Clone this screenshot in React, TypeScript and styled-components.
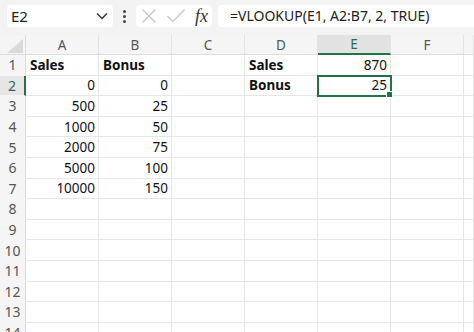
import styled, { createGlobalStyle, css } from "styled-components"

const GlobalStyle = createGlobalStyle`
	html, body {
		margin: 0;
		padding: 0;
		background: #ffffff;
		font-family: "Noto Sans", "Liberation Sans", sans-serif;
		overflow: hidden;
	}
`

const Page = styled.div`
	width: 474px;
	height: 332px;
	background: #f3f3f3;
	overflow: hidden;
`

const FormulaBar = styled.div`
	display: flex;
	align-items: center;
	height: 22px;
	padding: 5px 0 0 7px;
`

const NameBox = styled.div`
	display: flex;
	align-items: center;
	justify-content: space-between;
	width: 106px;
	height: 22px;
	box-sizing: border-box;
	padding: 0 4px 0 4px;
	background: #ffffff;
	border-radius: 4px;
	font-size: 15px;
	color: #222222;
`

const Dots = styled.div`
	display: flex;
	flex-direction: column;
	gap: 2px;
	margin: 0 10px 0 10px;

	span {
		width: 3px;
		height: 3px;
		border-radius: 2px;
		background: #444444;
	}
`

const ButtonBox = styled.div`
	display: flex;
	align-items: center;
	justify-content: space-between;
	width: 76px;
	height: 22px;
	box-sizing: border-box;
	padding: 0 4px 0 5px;
	background: #ffffff;
	border-radius: 4px;
`

const Fx = styled.span`
	font-family: "Liberation Serif", serif;
	font-style: italic;
	font-size: 18px;
	color: #333333;
`

const FormulaInput = styled.div`
	flex: 1;
	height: 22px;
	margin-left: 6px;
	padding-left: 12px;
	background: #ffffff;
	border-radius: 4px 0 0 4px;
	font-size: 14px;
	line-height: 22px;
	color: #222222;
	white-space: nowrap;
`

const Sheet = styled.div`
	display: grid;
	grid-template-columns: 26px repeat(6, 73px) 1fr;
	grid-template-rows: 20px;
	grid-auto-rows: 20.6px;
	margin-top: 8px;
	background: #ffffff;
	font-size: 13.5px;
	color: #111111;
`

const Corner = styled.div`
	position: relative;
	background: #f5f5f5;
	border-right: 1px solid #dddddd;
	border-bottom: 1px solid #dddddd;

	&::after {
		content: "";
		position: absolute;
		right: 2px;
		bottom: 1px;
		border-left: 16px solid transparent;
		border-bottom: 14px solid #dadada;
	}
`

const ColHead = styled.div<{ $active?: boolean }>`
	display: flex;
	align-items: center;
	justify-content: center;
	background: #f5f5f5;
	border-right: 1px solid #e3e3e3;
	border-bottom: 1px solid #dddddd;
	color: #555555;
	font-size: 13.5px;
	${(p) =>
		p.$active &&
		css`
			background: #e2e2e2;
			color: #2f6b4a;
			border-bottom: 2px solid #217346;
		`}
`

const RowHead = styled.div<{ $active?: boolean }>`
	display: flex;
	align-items: center;
	justify-content: center;
	background: #f5f5f5;
	border-right: 1px solid #dddddd;
	border-bottom: 1px solid #f5f5f5;
	color: #555555;
	font-size: 14px;
	${(p) =>
		p.$active &&
		css`
			background: #e6e6e6;
			color: #2f6b4a;
			border-right: 2px solid #217346;
		`}
`

const Cell = styled.div<{ $num?: boolean; $bold?: boolean; $selected?: boolean }>`
	position: relative;
	display: flex;
	align-items: center;
	justify-content: ${(p) => (p.$num ? "flex-end" : "flex-start")};
	padding: 0 3px 0 4px;
	border-right: 1px solid #e6e6e6;
	border-bottom: 1px solid #e6e6e6;
	font-weight: ${(p) => (p.$bold ? 700 : 400)};
	white-space: nowrap;
	${(p) =>
		p.$selected &&
		css`
			outline: 2px solid #217346;
			outline-offset: -1px;
			z-index: 1;
		`}
`

const Handle = styled.span`
	position: absolute;
	right: -3px;
	bottom: -3px;
	width: 5px;
	height: 5px;
	background: #217346;
	border: 1px solid #ffffff;
`

type CellData = { v?: string; num?: boolean; bold?: boolean }

const cols = ["A", "B", "C", "D", "E", "F", ""]

const data: Record<number, CellData[]> = {
	1: [{ v: "Sales", bold: true }, { v: "Bonus", bold: true }, {}, { v: "Sales", bold: true }, { v: "870", num: true }],
	2: [{ v: "0", num: true }, { v: "0", num: true }, {}, { v: "Bonus", bold: true }, { v: "25", num: true }],
	3: [{ v: "500", num: true }, { v: "25", num: true }],
	4: [{ v: "1000", num: true }, { v: "50", num: true }],
	5: [{ v: "2000", num: true }, { v: "75", num: true }],
	6: [{ v: "5000", num: true }, { v: "100", num: true }],
	7: [{ v: "10000", num: true }, { v: "150", num: true }],
}

const rows = Array.from({ length: 14 }, (_, i) => i + 1)

export default function App() {
	return (
		<>
			<GlobalStyle />
			<Page>
				<FormulaBar>
					<NameBox>
						<span>E2</span>
						<svg width="14" height="8" viewBox="0 0 14 8">
							<path d="M2 1.5 L7 6.5 L12 1.5" fill="none" stroke="#333" strokeWidth="1.4" />
						</svg>
					</NameBox>
					<Dots>
						<span />
						<span />
						<span />
					</Dots>
					<ButtonBox>
						<svg width="16" height="16" viewBox="0 0 16 16">
							<path d="M1.5 1.5 L14.5 14.5 M14.5 1.5 L1.5 14.5" stroke="#c4c4c4" strokeWidth="1.2" />
						</svg>
						<svg width="20" height="16" viewBox="0 0 20 16">
							<path d="M1.5 8 L7 13.5 L18.5 1.5" fill="none" stroke="#c4c4c4" strokeWidth="1.2" />
						</svg>
						<Fx>fx</Fx>
					</ButtonBox>
					<FormulaInput>=VLOOKUP(E1, A2:B7, 2, TRUE)</FormulaInput>
				</FormulaBar>
				<Sheet>
					<Corner />
					{cols.map((c, i) => (
						<ColHead key={i} $active={c === "E"}>
							{c}
						</ColHead>
					))}
					{rows.map((r) => (
						<>
							<RowHead key={"h" + r} $active={r === 2}>
								{r}
							</RowHead>
							{cols.map((c, i) => {
								const d = data[r]?.[i] ?? {}
								const selected = r === 2 && c === "E"
								return (
									<Cell key={r + c + i} $num={d.num} $bold={d.bold} $selected={selected}>
										{d.v}
										{selected && <Handle />}
									</Cell>
								)
							})}
						</>
					))}
				</Sheet>
			</Page>
		</>
	)
}
